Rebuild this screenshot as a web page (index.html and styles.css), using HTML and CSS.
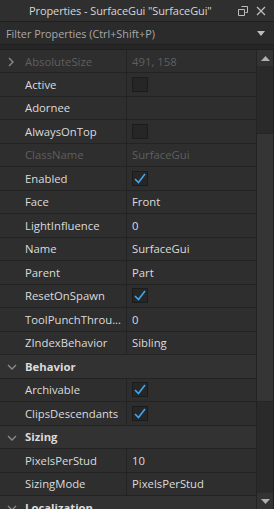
FILE: index.html
```html
<!DOCTYPE html>
<html lang="en">
<head>
    <meta charset="UTF-8">
    <meta name="viewport" content="width=device-width, initial-scale=1.0">
    <title>Properties</title>
    <link rel="stylesheet" href="styles.css">
</head>
<body>
    <div class="panel">
        <div class="titlebar">
            <span class="title">Properties - SurfaceGui "SurfaceGui"</span>
            <div class="win-btns">
                <svg width="10" height="10" viewBox="0 0 10 10"><path d="M3.5 0.5h6v6h-2M0.5 3.5h6v6h-6z" fill="none" stroke="#bdbdbd"/></svg>
                <svg width="10" height="10" viewBox="0 0 10 10"><path d="M1 1L9 9M9 1L1 9" stroke="#bdbdbd" stroke-width="1.3"/></svg>
            </div>
        </div>
        <div class="filter">
            <span>Filter Properties (Ctrl+Shift+P)</span>
            <svg width="8" height="5" viewBox="0 0 8 5"><path d="M0 0h8L4 5z" fill="#bdbdbd"/></svg>
        </div>
        <div class="body">
            <div class="list">
                <div class="row">
                    <div class="name disabled"><svg class="chev" width="6" height="10" viewBox="0 0 6 10"><path d="M1 1l4 4-4 4" fill="none" stroke="#8a8a8a" stroke-width="1.4"/></svg>AbsoluteSize</div>
                    <div class="value disabled">491, 158</div>
                </div>
                <div class="row">
                    <div class="name">Active</div>
                    <div class="value"><span class="check"></span></div>
                </div>
                <div class="row">
                    <div class="name">Adornee</div>
                    <div class="value"></div>
                </div>
                <div class="row">
                    <div class="name">AlwaysOnTop</div>
                    <div class="value"><span class="check"></span></div>
                </div>
                <div class="row">
                    <div class="name disabled">ClassName</div>
                    <div class="value disabled">SurfaceGui</div>
                </div>
                <div class="row">
                    <div class="name">Enabled</div>
                    <div class="value"><span class="check on"><svg width="14" height="13" viewBox="0 0 14 13"><path d="M2 7l3.5 3.5L12 2" fill="none" stroke="#3ea6f2" stroke-width="1.6"/></svg></span></div>
                </div>
                <div class="row">
                    <div class="name">Face</div>
                    <div class="value">Front</div>
                </div>
                <div class="row">
                    <div class="name">LightInfluence</div>
                    <div class="value">0</div>
                </div>
                <div class="row">
                    <div class="name">Name</div>
                    <div class="value">SurfaceGui</div>
                </div>
                <div class="row">
                    <div class="name">Parent</div>
                    <div class="value">Part</div>
                </div>
                <div class="row">
                    <div class="name">ResetOnSpawn</div>
                    <div class="value"><span class="check on"><svg width="14" height="13" viewBox="0 0 14 13"><path d="M2 7l3.5 3.5L12 2" fill="none" stroke="#3ea6f2" stroke-width="1.6"/></svg></span></div>
                </div>
                <div class="row">
                    <div class="name">ToolPunchThrou...</div>
                    <div class="value">0</div>
                </div>
                <div class="row">
                    <div class="name">ZIndexBehavior</div>
                    <div class="value">Sibling</div>
                </div>
                <div class="row cat">
                    <svg class="chev" width="10" height="6" viewBox="0 0 10 6"><path d="M1 1l4 4 4-4" fill="none" stroke="#8a8a8a" stroke-width="1.4"/></svg>Behavior
                </div>
                <div class="row">
                    <div class="name">Archivable</div>
                    <div class="value"><span class="check on"><svg width="14" height="13" viewBox="0 0 14 13"><path d="M2 7l3.5 3.5L12 2" fill="none" stroke="#3ea6f2" stroke-width="1.6"/></svg></span></div>
                </div>
                <div class="row">
                    <div class="name">ClipsDescendants</div>
                    <div class="value"><span class="check on"><svg width="14" height="13" viewBox="0 0 14 13"><path d="M2 7l3.5 3.5L12 2" fill="none" stroke="#3ea6f2" stroke-width="1.6"/></svg></span></div>
                </div>
                <div class="row cat">
                    <svg class="chev" width="10" height="6" viewBox="0 0 10 6"><path d="M1 1l4 4 4-4" fill="none" stroke="#8a8a8a" stroke-width="1.4"/></svg>Sizing
                </div>
                <div class="row">
                    <div class="name">PixelsPerStud</div>
                    <div class="value">10</div>
                </div>
                <div class="row">
                    <div class="name">SizingMode</div>
                    <div class="value">PixelsPerStud</div>
                </div>
                <div class="row cat">
                    <svg class="chev" width="10" height="6" viewBox="0 0 10 6"><path d="M1 1l4 4 4-4" fill="none" stroke="#8a8a8a" stroke-width="1.4"/></svg>Localization
                </div>
            </div>
            <div class="scrollbar">
                <div class="sb-btn"><svg width="9" height="5" viewBox="0 0 9 5"><path d="M0 5h9L4.5 0z" fill="#b0b0b0"/></svg></div>
                <div class="track"><div class="thumb"></div></div>
                <div class="sb-btn"><svg width="9" height="5" viewBox="0 0 9 5"><path d="M0 0h9L4.5 5z" fill="#b0b0b0"/></svg></div>
            </div>
        </div>
    </div>
</body>
</html>
```
FILE: styles.css
```css
:root {
    --bg: #2e2e2e;
    --line: #232323;
    --text: #dcdcdc;
    --dim: #5f5f5f;
}

* {
    box-sizing: border-box;
}

body {
    margin: 0;
    background-color: #262626;
    font-family: "Open Sans", "Noto Sans", sans-serif;
    font-size: 11.3px;
    color: var(--text);
    overflow: hidden;
}

.panel {
    width: 274px;
    height: 509px;
    display: flex;
    flex-direction: column;
    overflow: hidden;
}

.titlebar {
    height: 22px;
    flex-shrink: 0;
    display: flex;
    align-items: center;
    background-color: #2f2f2f;
    border-bottom: 1px solid #1f1f1f;
    padding: 0 8px 0 29px;
}

.title {
    flex-grow: 1;
    font-size: 11px;
    letter-spacing: -0.1px;
    color: #d6d6d6;
    white-space: nowrap;
}

.win-btns {
    display: flex;
    gap: 8px;
    align-items: center;
}

.filter {
    height: 23px;
    flex-shrink: 0;
    display: flex;
    align-items: center;
    justify-content: space-between;
    padding: 0 9px 0 6px;
    background-color: #2b2b2b;
    border-bottom: 1px solid #1f1f1f;
    color: #a8a8a8;
    font-size: 10.8px;
}

.body {
    flex-grow: 1;
    display: flex;
    margin-top: 4px;
    border-top: 1px solid #1f1f1f;
    min-height: 0;
}

.list {
    width: 257px;
    background-color: var(--bg);
    border-right: 1px solid var(--line);
    overflow: hidden;
}

.row {
    height: 23.5px;
    display: flex;
    border-bottom: 1px solid var(--line);
}

.row:first-child {
    height: 23px;
}

.name {
    width: 127px;
    flex-shrink: 0;
    display: flex;
    align-items: center;
    padding-left: 25px;
    border-right: 1px solid var(--line);
    position: relative;
    white-space: nowrap;
}

.name .chev {
    position: absolute;
    left: 8px;
    top: 7px;
}

.value {
    flex-grow: 1;
    display: flex;
    align-items: center;
    padding-left: 5px;
}

.disabled {
    color: var(--dim);
}

.check {
    width: 16px;
    height: 15px;
    background-color: #262626;
    border: 1px solid #1b1b1b;
    display: flex;
    align-items: center;
    justify-content: center;
}

.cat {
    align-items: center;
    padding-left: 25px;
    font-weight: bold;
    background-color: #323232;
    position: relative;
}

.cat .chev {
    position: absolute;
    left: 7px;
    top: 9px;
}

.scrollbar {
    width: 17px;
    display: flex;
    flex-direction: column;
    background-color: #2a2a2a;
    border-right: 1px solid #1f1f1f;
}

.sb-btn {
    height: 16px;
    display: flex;
    align-items: center;
    justify-content: center;
    background-color: #333333;
}

.track {
    flex-grow: 1;
    padding-top: 67px;
    padding-bottom: 91px;
    background-color: #2a2a2a;
}

.thumb {
    height: 100%;
    background-color: #353535;
    border-top: 1px solid #262626;
    border-bottom: 1px solid #262626;
}
```
